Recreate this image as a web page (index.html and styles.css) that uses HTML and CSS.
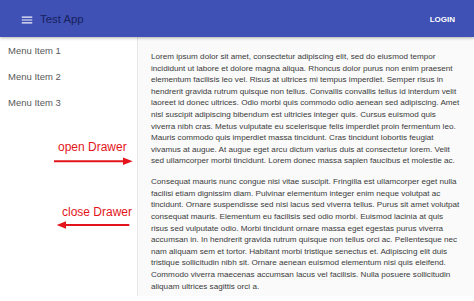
FILE: index.html
```html
<!DOCTYPE html>
<html>
<head>
<meta charset="utf-8">
<link rel="stylesheet" href="styles.css">
</head>
<body>
<div class="app">
  <header class="appbar">
    <svg class="menu-icon" viewBox="0 0 24 24" width="14" height="14"><path d="M3 18h18v-2H3v2zm0-5h18v-2H3v2zm0-7v2h18V6H3z" fill="#f3f4fb"/></svg>
    <span class="title">Test App</span>
    <span class="spacer"></span>
    <span class="login">LOGIN</span>
  </header>
  <div class="row">
    <nav class="drawer">
      <div class="item">Menu Item 1</div>
      <div class="item">Menu Item 2</div>
      <div class="item">Menu Item 3</div>
    </nav>
    <main class="content">
      <p>Lorem ipsum dolor sit amet, consectetur adipiscing elit, sed do eiusmod tempor incididunt ut labore et dolore magna aliqua. Rhoncus dolor purus non enim praesent elementum facilisis leo vel. Risus at ultrices mi tempus imperdiet. Semper risus in hendrerit gravida rutrum quisque non tellus. Convallis convallis tellus id interdum velit laoreet id donec ultrices. Odio morbi quis commodo odio aenean sed adipiscing. Amet nisl suscipit adipiscing bibendum est ultricies integer quis. Cursus euismod quis viverra nibh cras. Metus vulputate eu scelerisque felis imperdiet proin fermentum leo. Mauris commodo quis imperdiet massa tincidunt. Cras tincidunt lobortis feugiat vivamus at augue. At augue eget arcu dictum varius duis at consectetur lorem. Velit sed ullamcorper morbi tincidunt. Lorem donec massa sapien faucibus et molestie ac.</p>
      <p>Consequat mauris nunc congue nisi vitae suscipit. Fringilla est ullamcorper eget nulla facilisi etiam dignissim diam. Pulvinar elementum integer enim neque volutpat ac tincidunt. Ornare suspendisse sed nisi lacus sed viverra tellus. Purus sit amet volutpat consequat mauris. Elementum eu facilisis sed odio morbi. Euismod lacinia at quis risus sed vulputate odio. Morbi tincidunt ornare massa eget egestas purus viverra accumsan in. In hendrerit gravida rutrum quisque non tellus orci ac. Pellentesque nec nam aliquam sem et tortor. Habitant morbi tristique senectus et. Adipiscing elit duis tristique sollicitudin nibh sit. Ornare aenean euismod elementum nisi quis eleifend. Commodo viverra maecenas accumsan lacus vel facilisis. Nulla posuere sollicitudin aliquam ultrices sagittis orci a.</p>
    </main>
    <div class="annotations">
      <span class="note note-open">open Drawer</span>
      <span class="note note-close">close Drawer</span>
      <svg class="arrows" width="140" height="200" viewBox="0 0 140 200">
        <line x1="54" y1="124.3" x2="125" y2="124.3" stroke="#e3141b" stroke-width="2"/>
        <polygon points="123,120.5 132.7,124.3 123,128.1" fill="#e3141b"/>
        <line x1="129.3" y1="188" x2="64" y2="188" stroke="#e3141b" stroke-width="2"/>
        <polygon points="66,184.2 56.7,188 66,191.8" fill="#e3141b"/>
      </svg>
    </div>
  </div>
</div>
</body>
</html>
```
FILE: styles.css
```css
html, body {
  margin: 0;
  padding: 0;
  background: #ffffff;
}
.app {
  display: flex;
  flex-direction: column;
  font-family: "Liberation Sans", Arial, sans-serif;
}
.appbar {
  position: relative;
  z-index: 2;
  height: 37px;
  display: flex;
  align-items: center;
  padding: 0 19px 0 20px;
  background: #3f51b5;
  box-shadow: 0 1px 3px rgba(0,0,0,0.3);
}
.menu-icon {
  display: block;
  margin-top: 2px;
}
.title {
  margin-left: 6px;
  font-size: 11.4px;
  color: #18215c;
  margin-top: 1px;
}
.spacer {
  flex: 1;
}
.login {
  font-size: 8px;
  font-weight: 700;
  color: #ffffff;
  margin-top: 1px;
}
.row {
  position: relative;
  display: flex;
}
.drawer {
  width: 137px;
  flex: none;
  border-right: 1px solid #e6e6e6;
  padding-top: 1px;
  background: #ffffff;
}
.item {
  height: 26px;
  line-height: 26px;
  padding-left: 8px;
  font-size: 9.5px;
  color: #595959;
}
.content {
  flex: 1;
  background: #fafafa;
  padding: 14px 12.5px 4px 13px;
  font-size: 8.12px;
  line-height: 11.6px;
  color: #3a3a3a;
}
.content p {
  margin: 0 0 9.3px 0;
}
.content p:last-child {
  margin-bottom: 0;
}
.annotations {
  position: absolute;
  left: 0;
  top: 0;
  width: 140px;
  height: 200px;
  pointer-events: none;
}
.arrows {
  position: absolute;
  left: 0;
  top: 0;
}
.note {
  position: absolute;
  font-size: 12px;
  line-height: 12px;
  color: #e3141b;
  white-space: nowrap;
}
.note-open {
  left: 58px;
  top: 104.4px;
}
.note-close {
  left: 62px;
  top: 169.4px;
}
```
